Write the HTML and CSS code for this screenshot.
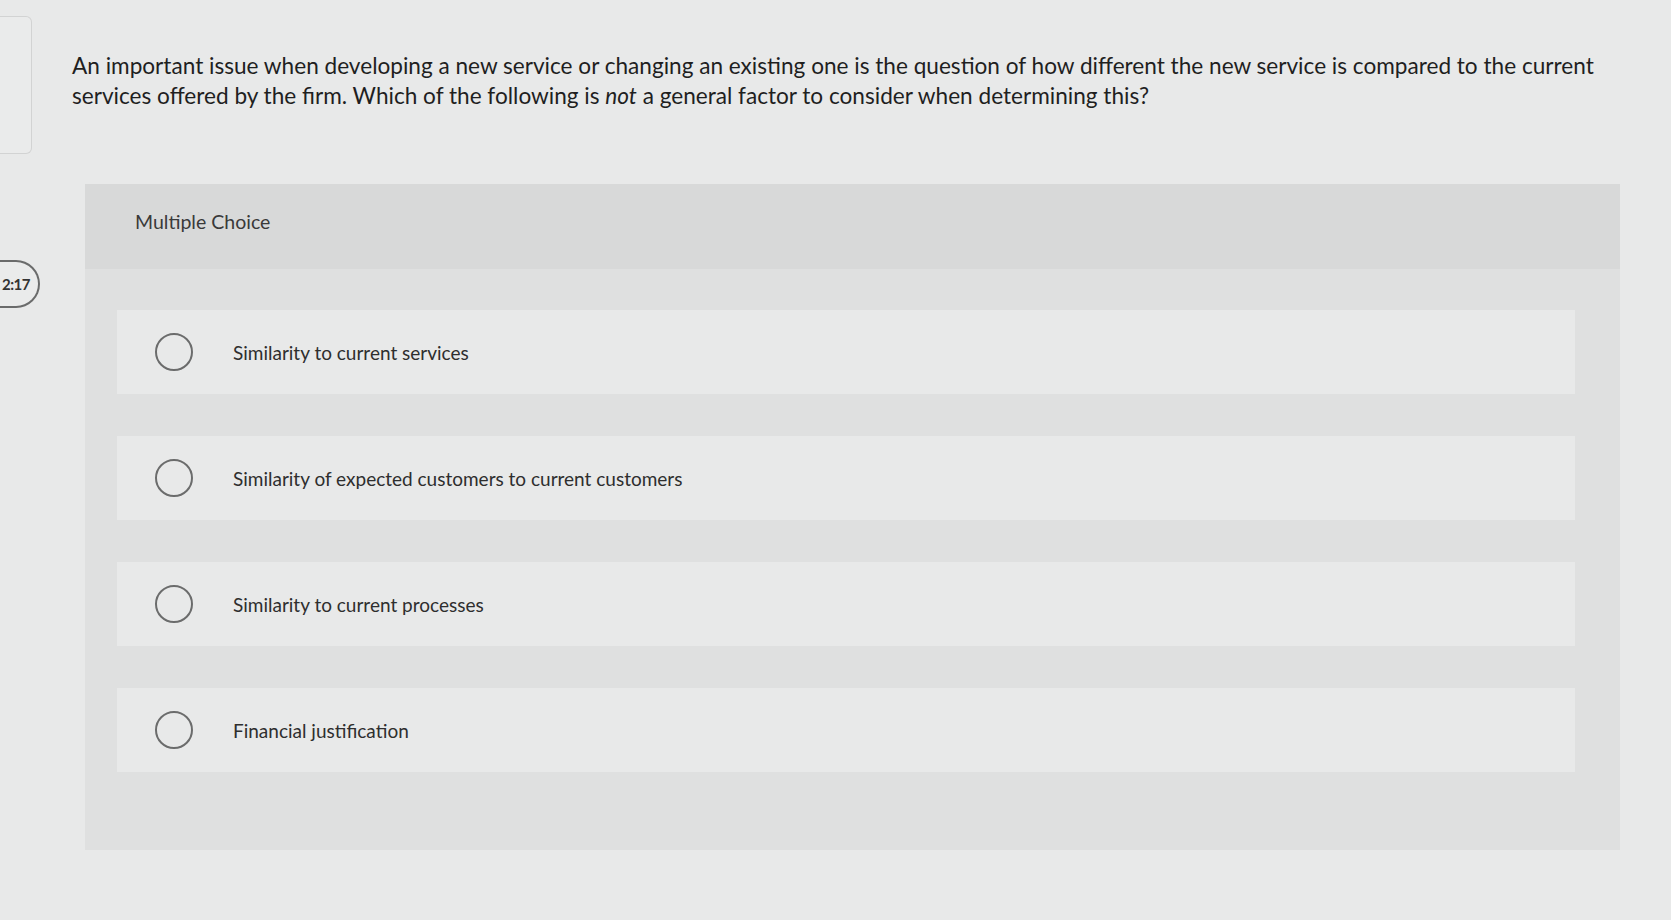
FILE: index.html
```html
<!DOCTYPE html>
<html lang="en">
<head>
<meta charset="utf-8">
<title>Multiple Choice</title>
<link rel="stylesheet" href="styles.css">
</head>
<body>
<div class="page">
  <aside class="rail">
    <div class="rail-card"></div>
    <div class="timer">2:17</div>
  </aside>
  <main class="main">
    <p class="question">An important issue when developing a new service or changing an existing one is the question of how different the new service is compared to the current services offered by the firm. Which of the following is <em>not</em> a general factor to consider when determining this?</p>
    <section class="panel">
      <header class="panel-head">Multiple Choice</header>
      <div class="options">
        <label class="option"><span class="radio"></span><span class="label">Similarity to current services</span></label>
        <label class="option"><span class="radio"></span><span class="label">Similarity of expected customers to current customers</span></label>
        <label class="option"><span class="radio"></span><span class="label">Similarity to current processes</span></label>
        <label class="option"><span class="radio"></span><span class="label">Financial justification</span></label>
      </div>
    </section>
  </main>
</div>
</body>
</html>
```
FILE: styles.css
```css
html, body {
  margin: 0;
  padding: 0;
}
body {
  background: #e8e9e9;
  font-family: Lato, "Open Sans", sans-serif;
  color: #2a2a2a;
  width: 1671px;
  height: 920px;
  overflow: hidden;
}
.page {
  display: flex;
  align-items: flex-start;
}
.rail {
  width: 40px;
  flex: none;
  display: flex;
  flex-direction: column;
}
.rail-card {
  margin-top: 16px;
  width: 32px;
  height: 138px;
  box-sizing: border-box;
  border: 1px solid #d2d3d3;
  border-left: none;
  border-radius: 0 6px 6px 0;
  background: #eaebeb;
}
.timer {
  margin-top: 106px;
  width: 40px;
  height: 48px;
  box-sizing: border-box;
  border: 2px solid #6a6b6b;
  border-left: none;
  border-radius: 0 24px 24px 0;
  display: flex;
  align-items: center;
  padding-left: 2px;
  font-size: 15px;
  font-weight: 700;
  color: #333;
  letter-spacing: -0.5px;
  background: #eaebeb;
}
.main {
  flex: 1;
  padding-left: 32px;
}
.question {
  margin: 51px 0 0 0;
  width: 1552px;
  font-size: 22.6px;
  line-height: 30px;
  color: #1f1f1f;
}
.question em {
  font-style: italic;
}
.panel {
  margin: 73px 0 0 13px;
  width: 1535px;
  height: 666px;
  background: #dfe0e0;
  display: flex;
  flex-direction: column;
}
.panel-head {
  background: #d8d9d9;
  height: 85px;
  padding: 26px 0 0 50px;
  box-sizing: border-box;
  font-size: 19.5px;
  color: #3a3a3a;
}
.options {
  padding: 41px 45px 0 32px;
  display: flex;
  flex-direction: column;
  gap: 42px;
}
.option {
  height: 84px;
  background: #e8e9e9;
  display: flex;
  align-items: center;
  padding-left: 38px;
  gap: 40px;
}
.radio {
  width: 38px;
  height: 38px;
  box-sizing: border-box;
  border: 2px solid #6b6c6c;
  border-radius: 50%;
  flex: none;
}
.label {
  font-size: 19px;
  color: #2e2e2e;
}
```
